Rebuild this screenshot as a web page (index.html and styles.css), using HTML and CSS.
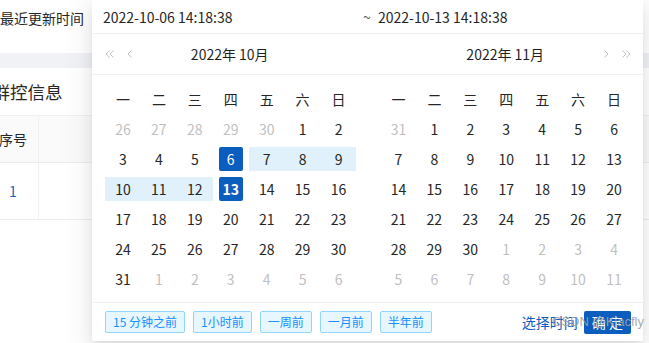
FILE: index.html
```html
<!DOCTYPE html>
<html lang="zh-CN">
<head>
<meta charset="utf-8">
<title>Range picker</title>
<link rel="stylesheet" href="styles.css">
</head>
<body>
<div class="page">
  <div class="filter-row"><span class="label">最近更新时间</span></div>
  <div class="band"></div>
  <div class="section-title">群控信息</div>
  <div class="tbl">
    <div class="tr thead">
      <div class="cell-idx">序号</div>
      <div class="cell-rest"></div>
    </div>
    <div class="tr tbody">
      <div class="cell-idx"><span class="link">1</span></div>
      <div class="cell-rest"></div>
    </div>
  </div>
</div>

<div class="picker">
  <div class="inputs">
    <div class="input input-start">2022-10-06 14:18:38</div>
    <div class="sep">~</div>
    <div class="input">2022-10-13 14:18:38</div>
  </div>
  <div class="panels">
    <div class="half">
      <div class="head">
        <div class="nav nav-left">
          <svg class="ico dbl" viewBox="0 0 9 8"><path d="M4.5 0.5 L1 4 L4.5 7.5 M8.5 0.5 L5 4 L8.5 7.5"/></svg>
          <svg class="ico sgl" viewBox="0 0 5 8"><path d="M4.5 0.5 L1 4 L4.5 7.5"/></svg>
        </div>
        <div class="title">2022年 10月</div>
        <div class="nav nav-right"></div>
      </div>
      <div class="body">
        <div class="wk">一</div><div class="wk">二</div><div class="wk">三</div><div class="wk">四</div><div class="wk">五</div><div class="wk">六</div><div class="wk">日</div>
        <div class="c off"><span>26</span></div><div class="c off"><span>27</span></div><div class="c off"><span>28</span></div><div class="c off"><span>29</span></div><div class="c off"><span>30</span></div><div class="c"><span>1</span></div><div class="c"><span>2</span></div>
        <div class="c"><span>3</span></div><div class="c"><span>4</span></div><div class="c"><span>5</span></div><div class="c"><span class="sel">6</span></div><div class="c range"><span>7</span></div><div class="c range"><span>8</span></div><div class="c range"><span>9</span></div>
        <div class="c range"><span>10</span></div><div class="c range"><span>11</span></div><div class="c range"><span>12</span></div><div class="c"><span class="sel today">13</span></div><div class="c"><span>14</span></div><div class="c"><span>15</span></div><div class="c"><span>16</span></div>
        <div class="c"><span>17</span></div><div class="c"><span>18</span></div><div class="c"><span>19</span></div><div class="c"><span>20</span></div><div class="c"><span>21</span></div><div class="c"><span>22</span></div><div class="c"><span>23</span></div>
        <div class="c"><span>24</span></div><div class="c"><span>25</span></div><div class="c"><span>26</span></div><div class="c"><span>27</span></div><div class="c"><span>28</span></div><div class="c"><span>29</span></div><div class="c"><span>30</span></div>
        <div class="c"><span>31</span></div><div class="c off"><span>1</span></div><div class="c off"><span>2</span></div><div class="c off"><span>3</span></div><div class="c off"><span>4</span></div><div class="c off"><span>5</span></div><div class="c off"><span>6</span></div>
      </div>
    </div>
    <div class="half">
      <div class="head">
        <div class="nav nav-left"></div>
        <div class="title">2022年 11月</div>
        <div class="nav nav-right">
          <svg class="ico sgl" viewBox="0 0 5 8"><path d="M0.5 0.5 L4 4 L0.5 7.5"/></svg>
          <svg class="ico dbl" viewBox="0 0 9 8"><path d="M0.5 0.5 L4 4 L0.5 7.5 M4.5 0.5 L8 4 L4.5 7.5"/></svg>
        </div>
      </div>
      <div class="body">
        <div class="wk">一</div><div class="wk">二</div><div class="wk">三</div><div class="wk">四</div><div class="wk">五</div><div class="wk">六</div><div class="wk">日</div>
        <div class="c off"><span>31</span></div><div class="c"><span>1</span></div><div class="c"><span>2</span></div><div class="c"><span>3</span></div><div class="c"><span>4</span></div><div class="c"><span>5</span></div><div class="c"><span>6</span></div>
        <div class="c"><span>7</span></div><div class="c"><span>8</span></div><div class="c"><span>9</span></div><div class="c"><span>10</span></div><div class="c"><span>11</span></div><div class="c"><span>12</span></div><div class="c"><span>13</span></div>
        <div class="c"><span>14</span></div><div class="c"><span>15</span></div><div class="c"><span>16</span></div><div class="c"><span>17</span></div><div class="c"><span>18</span></div><div class="c"><span>19</span></div><div class="c"><span>20</span></div>
        <div class="c"><span>21</span></div><div class="c"><span>22</span></div><div class="c"><span>23</span></div><div class="c"><span>24</span></div><div class="c"><span>25</span></div><div class="c"><span>26</span></div><div class="c"><span>27</span></div>
        <div class="c"><span>28</span></div><div class="c"><span>29</span></div><div class="c"><span>30</span></div><div class="c off"><span>1</span></div><div class="c off"><span>2</span></div><div class="c off"><span>3</span></div><div class="c off"><span>4</span></div>
        <div class="c off"><span>5</span></div><div class="c off"><span>6</span></div><div class="c off"><span>7</span></div><div class="c off"><span>8</span></div><div class="c off"><span>9</span></div><div class="c off"><span>10</span></div><div class="c off"><span>11</span></div>
      </div>
    </div>
  </div>
  <div class="footer">
    <div class="presets">
      <span class="tag">15 分钟之前</span>
      <span class="tag">1小时前</span>
      <span class="tag">一周前</span>
      <span class="tag">一月前</span>
      <span class="tag">半年前</span>
    </div>
    <div class="actions">
      <span class="time-link">选择时间</span>
      <span class="ok">确 定</span>
    </div>
  </div>
</div>
<div class="watermark">CSDN @Kiacfly</div>
</body>
</html>
```
FILE: styles.css
```css
* { box-sizing: border-box; }
html, body {
  margin: 0;
  padding: 0;
}
body {
  width: 649px;
  height: 343px;
  overflow: hidden;
  position: relative;
  background: #fff;
  font-family: "Noto Sans CJK SC", "Noto Sans", sans-serif;
  font-size: 14px;
  color: #262626;
}

/* background page */
.filter-row {
  height: 53px;
}
.label {
  display: block;
  line-height: 36px;
  font-size: 14px;
}
.band {
  height: 15px;
  background: #f0f2f5;
}
.section-title {
  height: 47px;
  line-height: 47px;
  font-size: 17.5px;
  margin-left: -7.5px;
  color: #262626;
}
.tbl {
  margin-left: -12px;
  border-top: 1px solid #f0f0f0;
}
.tr {
  display: flex;
  border-bottom: 1px solid #ececec;
}
.thead {
  height: 47px;
  background: #fafafa;
}
.tbody {
  height: 57px;
}
.cell-idx {
  width: 51px;
  border-right: 1px solid #f0f0f0;
  display: flex;
  align-items: center;
  justify-content: center;
}
.cell-rest { flex: 1; }
.link { color: #1565c0; }

/* picker popup */
.picker {
  position: absolute;
  left: 92px;
  top: 0;
  width: 551px;
  height: 341px;
  background: #fff;
  border-radius: 0 0 2px 2px;
  box-shadow: 0 3px 6px -4px rgba(0,0,0,.12), 0 6px 16px 0 rgba(0,0,0,.08), 0 9px 28px 8px rgba(0,0,0,.05);
  display: flex;
  flex-direction: column;
}
.inputs {
  height: 34px;
  border-bottom: 1px solid #f0f0f0;
  display: flex;
  align-items: center;
  line-height: 22px;
}
.input-start {
  width: 264px;
  padding-left: 11px;
}
.sep {
  width: 22px;
  text-align: center;
  color: #595959;
}
.panels {
  display: flex;
}
.half {
  flex: 1;
}
.head {
  height: 41px;
  border-bottom: 1px solid #f0f0f0;
  display: grid;
  grid-template-columns: 1fr auto 1fr;
  align-items: center;
}
.title {
  font-weight: 400;
  line-height: 22px;
  color: #1f1f1f;
}
.nav {
  display: flex;
  align-items: center;
  gap: 13px;
}
.nav-left { padding-left: 13px; }
.nav-right { justify-content: flex-end; padding-right: 12px; }
.ico {
  height: 8px;
  fill: none;
  stroke: #bfbfbf;
  stroke-width: 1;
}
.ico.dbl { width: 9px; }
.ico.sgl { width: 5px; }

.body {
  display: grid;
  grid-template-columns: repeat(7, 1fr);
  grid-auto-rows: 30px;
  padding: 9px 11px 8px 13px;
}
.wk, .c {
  display: flex;
  align-items: center;
  justify-content: center;
}
.c span {
  min-width: 24px;
  height: 24px;
  line-height: 24px;
  text-align: center;
  border-radius: 2px;
}
.c.off { color: #bfbfbf; }
.c.range {
  background: linear-gradient(transparent 3px, #e1f1fb 3px, #e1f1fb 27px, transparent 27px);
}
.c span.sel {
  background: #0b5ebd;
  color: #fff;
}
.c span.today { font-weight: 700; }

.footer {
  height: 39px;
  margin-top: auto;
  border-top: 1px solid #f0f0f0;
  display: flex;
  align-items: center;
  padding: 0 12px 0 13px;
}
.presets {
  display: flex;
  gap: 8px;
}
.tag {
  height: 22px;
  line-height: 20px;
  padding: 0 7px;
  font-size: 12px;
  color: #1890ff;
  background: #e6f7ff;
  border: 1px solid #91d5ff;
  border-radius: 2px;
}
.actions {
  margin-left: auto;
  display: flex;
  align-items: center;
  gap: 6px;
}
.time-link {
  color: #0b5ebd;
  line-height: 22px;
}
.ok {
  height: 23px;
  line-height: 23px;
  padding: 0 8px;
  background: #0b5ebd;
  color: #fff;
  border-radius: 2px;
}
.watermark {
  position: absolute;
  left: 552px;
  top: 314px;
  z-index: 2;
  font-family: "Liberation Sans", sans-serif;
  font-size: 13px;
  line-height: 16px;
  color: rgba(160,160,160,0.92);
  pointer-events: none;
}
```
